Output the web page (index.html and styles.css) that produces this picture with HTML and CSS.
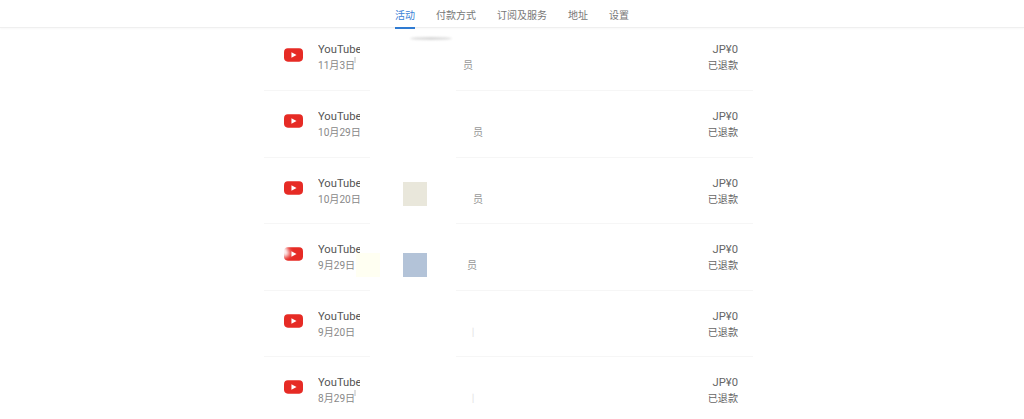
FILE: index.html
```html
<!DOCTYPE html>
<html lang="zh-CN">
<head>
    <meta charset="UTF-8">
    <meta name="viewport" content="width=device-width, initial-scale=1.0">
    <title>活动</title>
    <link rel="stylesheet" href="styles.css">
</head>
<body>
    <nav class="tabs">
        <a class="tab active">活动</a>
        <a class="tab">付款方式</a>
        <a class="tab">订阅及服务</a>
        <a class="tab">地址</a>
        <a class="tab">设置</a>
    </nav>
    <main class="list">
        <div class="row">
            <svg class="yt" viewBox="0 0 20 14"><path class="yt-bg" d="M4 0h12c2.500 0 4 1.500 4 4v6c0 2.500-1.500 4-4 4H4c-2.500 0-4-1.500-4-4V4c0-2.500 1.500-4 4-4z"/><path class="yt-play" d="M7.800 4.200l5.400 2.800-5.400 2.800z"/></svg>
            <div class="info">
                <div class="name">YouTube</div>
                <div class="sub"><span class="date">11月3日</span><span class="tail">员</span></div>
            </div>
            <div class="price"><div class="amount">JP¥0</div><div class="status">已退款</div></div>
        </div>
        <div class="row">
            <svg class="yt" viewBox="0 0 20 14"><path class="yt-bg" d="M4 0h12c2.500 0 4 1.500 4 4v6c0 2.500-1.500 4-4 4H4c-2.500 0-4-1.500-4-4V4c0-2.500 1.500-4 4-4z"/><path class="yt-play" d="M7.800 4.200l5.400 2.800-5.400 2.800z"/></svg>
            <div class="info">
                <div class="name">YouTube</div>
                <div class="sub"><span class="date">10月29日</span><span class="tail far">员</span></div>
            </div>
            <div class="price"><div class="amount">JP¥0</div><div class="status">已退款</div></div>
        </div>
        <div class="row">
            <svg class="yt" viewBox="0 0 20 14"><path class="yt-bg" d="M4 0h12c2.500 0 4 1.500 4 4v6c0 2.500-1.500 4-4 4H4c-2.500 0-4-1.500-4-4V4c0-2.500 1.500-4 4-4z"/><path class="yt-play" d="M7.800 4.200l5.400 2.800-5.400 2.800z"/></svg>
            <div class="info">
                <div class="name">YouTube</div>
                <div class="sub"><span class="date">10月20日</span><span class="tail far">员</span></div>
            </div>
            <div class="price"><div class="amount">JP¥0</div><div class="status">已退款</div></div>
        </div>
        <div class="row">
            <svg class="yt" viewBox="0 0 20 14"><path class="yt-bg" d="M4 0h12c2.500 0 4 1.500 4 4v6c0 2.500-1.500 4-4 4H4c-2.500 0-4-1.500-4-4V4c0-2.500 1.500-4 4-4z"/><path class="yt-play" d="M7.800 4.200l5.400 2.800-5.400 2.800z"/></svg>
            <div class="info">
                <div class="name">YouTube</div>
                <div class="sub"><span class="date">9月29日</span><span class="tail mid">员</span></div>
            </div>
            <div class="price"><div class="amount">JP¥0</div><div class="status">已退款</div></div>
        </div>
        <div class="row">
            <svg class="yt" viewBox="0 0 20 14"><path class="yt-bg" d="M4 0h12c2.500 0 4 1.500 4 4v6c0 2.500-1.500 4-4 4H4c-2.500 0-4-1.500-4-4V4c0-2.500 1.500-4 4-4z"/><path class="yt-play" d="M7.800 4.200l5.400 2.800-5.400 2.800z"/></svg>
            <div class="info">
                <div class="name">YouTube</div>
                <div class="sub"><span class="date">9月20日</span><span class="tail sliver">丨</span></div>
            </div>
            <div class="price"><div class="amount">JP¥0</div><div class="status">已退款</div></div>
        </div>
        <div class="row">
            <svg class="yt" viewBox="0 0 20 14"><path class="yt-bg" d="M4 0h12c2.500 0 4 1.500 4 4v6c0 2.500-1.500 4-4 4H4c-2.500 0-4-1.500-4-4V4c0-2.500 1.500-4 4-4z"/><path class="yt-play" d="M7.800 4.200l5.400 2.800-5.400 2.800z"/></svg>
            <div class="info">
                <div class="name">YouTube</div>
                <div class="sub"><span class="date">8月29日</span><span class="tail sliver">丨</span></div>
            </div>
            <div class="price"><div class="amount">JP¥0</div><div class="status">已退款</div></div>
        </div>
    </main>

    <!-- retouched patches lying over the list -->
    <div class="patch wipe"></div>
    <div class="patch smudge"></div>
    <div class="patch beige"></div>
    <div class="patch blue"></div>
    <div class="patch cream"></div>
    <div class="patch blur-icon"></div>
    <div class="patch speck speck-top"></div>
    <div class="patch speck speck-bottom"></div>
</body>
</html>
```

FILE: styles.css
```css
html, body {
    height: 419px;
    overflow: hidden;
}
body {
    margin: 0;
    padding: 0;
    background-color: #fff;
    font-family: Roboto, "Noto Sans CJK SC", sans-serif;
    color: #5f6368;
    position: relative;
}
.tabs {
    display: flex;
    justify-content: center;
    gap: 21px;
    height: 27px;
    border-bottom: 1px solid #efefef;
    box-shadow: 0 1px 2px rgba(0, 0, 0, 0.03);
}
.tab {
    font-size: 10px;
    line-height: 16px;
    padding-top: 8px;
    height: 19px;
    color: #777;
}
.tab.active {
    color: #3b82d6;
    border-bottom: 2px solid #2f7bd2;
}
.list {
    width: 489px;
    margin: 0 0 0 264px;
}
.row {
    display: flex;
    align-items: flex-start;
    height: 66.6px;
    box-sizing: border-box;
    border-bottom: 1px solid #f6f6f6;
    padding: 18px 15px 0 20px;
}
.row:first-child {
    height: 63px;
    padding-top: 14px;
}
.yt {
    width: 19px;
    height: 14px;
    margin-top: 5px;
    flex-shrink: 0;
}
.row:first-child .yt {
    margin-top: 6px;
}
.yt-bg {
    fill: #e62b25;
}
.yt-play {
    fill: #fff;
}
.info {
    margin-left: 15px;
    flex-grow: 1;
}
.name {
    width: 42px;
    overflow: hidden;
    white-space: nowrap;
    font-size: 11.2px;
    line-height: 16px;
    color: #555;
}
.sub {
    display: flex;
    font-size: 10.1px;
    line-height: 15px;
    color: #888;
}
.date {
    width: 145px;
}
.tail {
    color: #999;
}
.tail.far {
    margin-left: 10px;
}
.tail.mid {
    margin-left: 4px;
}
.tail.sliver {
    margin-left: 5px;
    color: #e4e4e4;
}
.price {
    text-align: right;
    font-size: 10.1px;
    line-height: 15px;
    color: #666;
}
.amount {
    font-size: 11.2px;
    line-height: 16px;
}
.patch {
    position: absolute;
}
.wipe {
    left: 370px;
    top: 40px;
    width: 86px;
    height: 379px;
    background: #fff;
}
.smudge {
    left: 410px;
    top: 37px;
    width: 42px;
    height: 3px;
    border-radius: 50%;
    background: #d8d8d8;
    filter: blur(1px);
}
.beige {
    left: 403px;
    top: 182px;
    width: 24px;
    height: 24px;
    background: #e9e7db;
}
.blue {
    left: 403px;
    top: 253px;
    width: 24px;
    height: 24px;
    background: #b3c3d8;
}
.cream {
    left: 356px;
    top: 253px;
    width: 24px;
    height: 24px;
    background: #fffff2;
}
.blur-icon {
    left: 280px;
    top: 245px;
    width: 8px;
    height: 12px;
    background: #fff;
    transform: rotate(-30deg);
    filter: blur(2px);
}
.speck {
    width: 2px;
    height: 6px;
    background: #ddd;
}
.speck-top {
    left: 354px;
    top: 57px;
}
.speck-bottom {
    left: 354px;
    top: 390px;
}
```
